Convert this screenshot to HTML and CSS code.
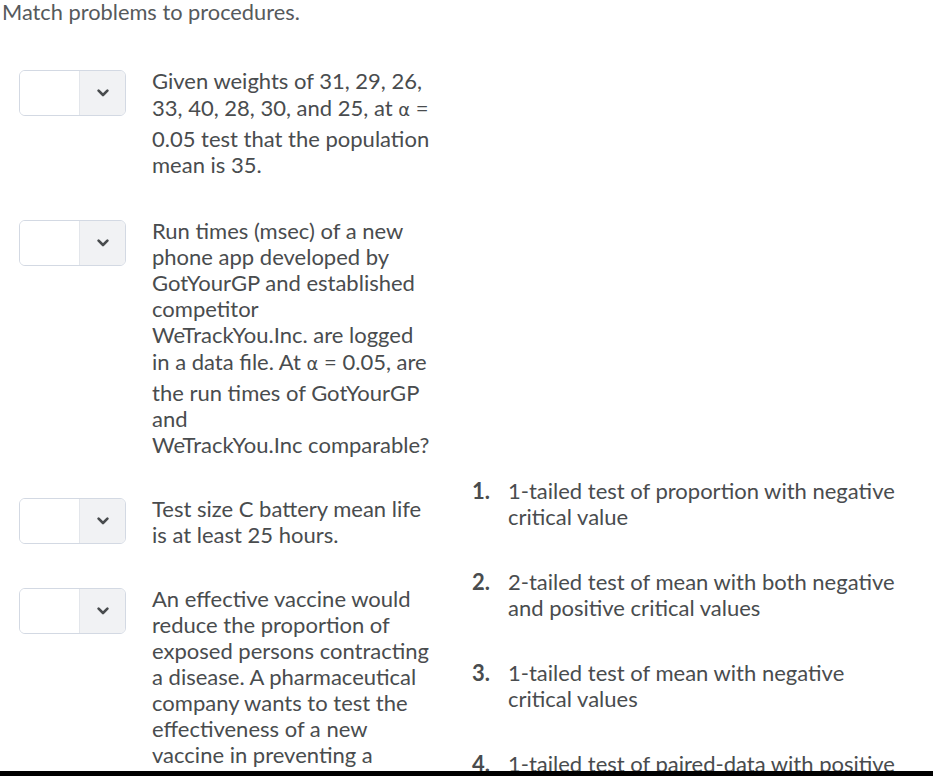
FILE: index.html
```html
<!DOCTYPE html>
<html lang="en">
<head>
<meta charset="utf-8">
<title>Matching question</title>
<link rel="stylesheet" href="styles.css">
</head>
<body>
  <h1 class="prompt">Match problems to procedures.</h1>

  <div class="match">
    <div class="problems">
      <div class="problem">
        <div class="picker">
          <span class="picker-value"></span>
          <span class="picker-btn"><svg width="12" height="8" viewBox="0 0 12 8"><path d="M1.6 1.6 L6 6 L10.4 1.6" fill="none" stroke="#494c4e" stroke-width="2.6" stroke-linecap="round" stroke-linejoin="round"/></svg></span>
        </div>
        <p class="problem-text">Given weights of 31, 29, 26, 33, 40, 28, 30, and 25, at <span class="greek">α</span> = 0.05 test that the population mean is 35.</p>
      </div>

      <div class="problem problem--spaced">
        <div class="picker">
          <span class="picker-value"></span>
          <span class="picker-btn"><svg width="12" height="8" viewBox="0 0 12 8"><path d="M1.6 1.6 L6 6 L10.4 1.6" fill="none" stroke="#494c4e" stroke-width="2.6" stroke-linecap="round" stroke-linejoin="round"/></svg></span>
        </div>
        <p class="problem-text">Run times (msec) of a new phone app developed by GotYourGP and established competitor<br>WeTrackYou.Inc. are logged in a data file. At <span class="greek">α</span> = 0.05, are the run times of GotYourGP and<br>WeTrackYou.Inc comparable?</p>
      </div>

      <div class="problem">
        <div class="picker">
          <span class="picker-value"></span>
          <span class="picker-btn"><svg width="12" height="8" viewBox="0 0 12 8"><path d="M1.6 1.6 L6 6 L10.4 1.6" fill="none" stroke="#494c4e" stroke-width="2.6" stroke-linecap="round" stroke-linejoin="round"/></svg></span>
        </div>
        <p class="problem-text">Test size C battery mean life is at least 25 hours.</p>
      </div>

      <div class="problem">
        <div class="picker">
          <span class="picker-value"></span>
          <span class="picker-btn"><svg width="12" height="8" viewBox="0 0 12 8"><path d="M1.6 1.6 L6 6 L10.4 1.6" fill="none" stroke="#494c4e" stroke-width="2.6" stroke-linecap="round" stroke-linejoin="round"/></svg></span>
        </div>
        <p class="problem-text">An effective vaccine would reduce the proportion of exposed persons contracting a disease. A pharmaceutical company wants to test the effectiveness of a new vaccine in preventing a</p>
      </div>
    </div>

    <ol class="choices">
      <li class="choice"><span class="choice-num">1.</span><span class="choice-text">1-tailed test of proportion with negative critical value</span></li>
      <li class="choice"><span class="choice-num">2.</span><span class="choice-text">2-tailed test of mean with both negative and positive critical values</span></li>
      <li class="choice"><span class="choice-num">3.</span><span class="choice-text">1-tailed test of mean with negative critical values</span></li>
      <li class="choice"><span class="choice-num">4.</span><span class="choice-text">1-tailed test of paired-data with positive critical value</span></li>
    </ol>
  </div>

  <div class="frame-edge"></div>
</body>
</html>
```

FILE: styles.css
```css
html, body {
  margin: 0;
  padding: 0;
  background: #ffffff;
}

body {
  font-family: Lato, "Open Sans", "Liberation Sans", sans-serif;
  color: #494c4e;
  font-size: 22px;
  line-height: 26px;
  overflow: hidden;
  height: 776px;
}

.prompt {
  margin: 0;
  padding: 0 0 0 2px;
  font-size: 21.8px;
  font-weight: 400;
  line-height: 24px;
  color: #565a5c;
}

.match {
  display: flex;
  align-items: flex-start;
  margin-top: 46px;
}

.problems {
  display: flex;
  flex-direction: column;
  gap: 40px;
  padding-left: 19px;
  width: 421px;
  flex: none;
}

.problem {
  display: flex;
  align-items: flex-start;
  gap: 26px;
}

.problem--spaced {
  margin-top: 2px;
}

.picker {
  flex: none;
  display: flex;
  width: 105px;
  height: 44px;
  border: 1px solid #d3d9e3;
  border-radius: 6px;
  overflow: hidden;
  background: #ffffff;
}

.picker-value {
  flex: 1;
  background: #ffffff;
}

.picker-btn {
  width: 45px;
  flex: none;
  display: flex;
  align-items: center;
  justify-content: center;
  background: #f1f2f4;
  border-left: 1px solid #e3e6eb;
}

.problem-text {
  margin: -2px 0 0;
  width: 284px;
}

.greek {
  font-family: "DejaVu Sans", sans-serif;
  font-size: 18px;
  line-height: 32px;
}

.choices {
  list-style: none;
  margin: 0;
  padding: 408px 0 0 32px;
  display: flex;
  flex-direction: column;
  gap: 39px;
}

.choice {
  display: flex;
}

.choice-num {
  width: 36px;
  flex: none;
  font-weight: 700;
}

.choice-text {
  width: 396px;
}

.frame-edge {
  position: fixed;
  left: 0;
  right: 0;
  bottom: 0;
  height: 5px;
  background: #000000;
}
```
